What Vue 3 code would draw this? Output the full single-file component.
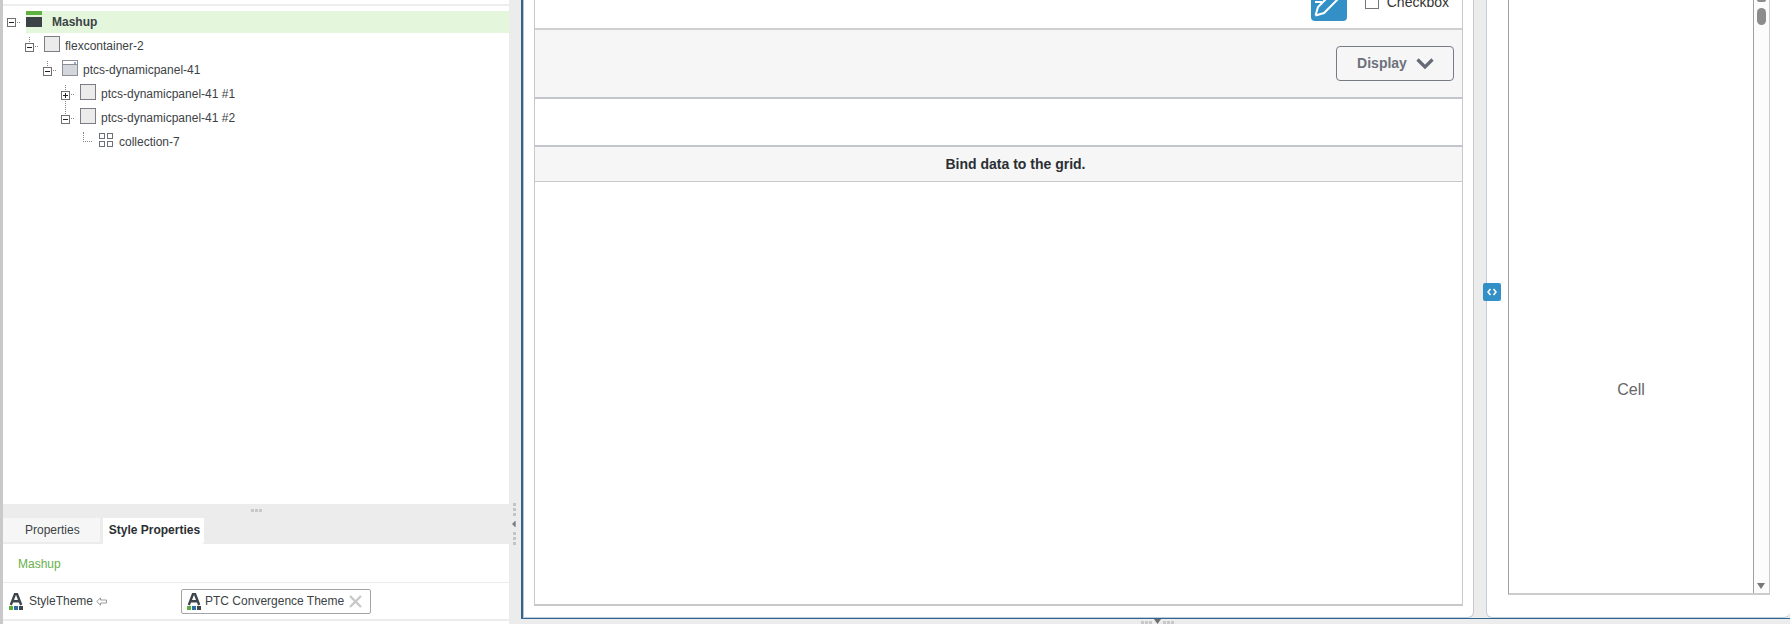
<script setup>
const rows = [
  { name: 'flexcontainer-2', depth: 1, toggle: '−', icon: 'box' },
  { name: 'ptcs-dynamicpanel-41', depth: 2, toggle: '−', icon: 'panel' },
  { name: 'ptcs-dynamicpanel-41 #1', depth: 3, toggle: '+', icon: 'box' },
  { name: 'ptcs-dynamicpanel-41 #2', depth: 3, toggle: '−', icon: 'box', tall: true },
]
</script>

<template>
  <div class="page">
    <aside class="left">
      <div class="tree">
        <div class="root">
          <span class="toggle"><i class="minus"></i></span>
          <span class="dots-h root-dots"></span>
          <span class="mashup-row">
            <svg class="mashup-icon" width="16" height="16" viewBox="0 0 16 16">
              <rect x="0" y="0" width="16" height="4" fill="#5fb23f" />
              <rect x="0" y="6" width="16" height="10" fill="#3c4245" />
            </svg>
            <b>Mashup</b>
          </span>
        </div>
        <div v-for="r in rows" :key="r.name" class="node" :class="'d' + r.depth">
          <span class="connector" :class="{ tall: r.tall }"></span>
          <span class="toggle"><i class="minus"></i><i v-if="r.toggle === '+'" class="plus"></i></span>
          <span class="dots-h"></span>
          <span v-if="r.icon === 'box'" class="box-icon"></span>
          <span v-else class="panel-icon"><i></i></span>
          <span class="label">{{ r.name }}</span>
        </div>
        <div class="node d4">
          <span class="elbow"></span>
          <svg class="grid-icon" width="14" height="14" viewBox="0 0 14 14">
            <rect x="0.5" y="0.5" width="5" height="5" fill="none" stroke="#6c7078" />
            <rect x="8.5" y="0.5" width="5" height="5" fill="none" stroke="#6c7078" />
            <rect x="0.5" y="8.5" width="5" height="5" fill="none" stroke="#6c7078" />
            <rect x="8.5" y="8.5" width="5" height="5" fill="none" stroke="#6c7078" />
          </svg>
          <span class="label">collection-7</span>
        </div>
      </div>
      <div class="tabbar">
        <div class="grip"><i></i><i></i><i></i></div>
        <div class="tabs">
          <div class="tab">Properties</div>
          <div class="tab active">Style Properties</div>
        </div>
      </div>
      <div class="selected-name">Mashup</div>
      <div class="prop-row">
        <svg class="theme-icon" width="14" height="17" viewBox="0 0 14 17">
          <path d="M1.8 12 L6 1 H8 L12.2 12 M3.5 8.3 H10.5" fill="none" stroke="#3f464b" stroke-width="2.4" />
          <rect x="0" y="13" width="4" height="4" fill="#5aae3a" />
          <rect x="5" y="13" width="4" height="4" fill="#2f6ea5" />
          <rect x="10" y="13" width="4" height="4" fill="#3f464b" />
        </svg>
        <span class="prop-name">StyleTheme</span>
        <svg class="arrow" width="11" height="9" viewBox="0 0 11 9">
          <path d="M4.5 0.8 L0.8 4.5 L4.5 8.2 V6 H10.5 V3 H4.5 Z" fill="#fff" stroke="#9a9a9a" />
        </svg>
        <div class="chip">
          <svg class="theme-icon" width="14" height="17" viewBox="0 0 14 17">
            <path d="M1.8 12 L6 1 H8 L12.2 12 M3.5 8.3 H10.5" fill="none" stroke="#3f464b" stroke-width="2.4" />
            <rect x="0" y="13" width="4" height="4" fill="#5aae3a" />
            <rect x="5" y="13" width="4" height="4" fill="#2f6ea5" />
            <rect x="10" y="13" width="4" height="4" fill="#3f464b" />
          </svg>
          <span>PTC Convergence Theme</span>
          <svg class="x" width="13" height="13" viewBox="0 0 13 13">
            <path d="M1 1 L12 12 M12 1 L1 12" stroke="#c8c8c8" stroke-width="2.4" />
          </svg>
        </div>
      </div>
    </aside>

    <div class="splitter">
      <div class="vdots"><i></i><i></i><i></i></div>
      <svg class="collapse" width="4" height="6" viewBox="0 0 4 6">
        <path d="M0 3 L3 0 V6 Z" fill="#8a7a66" />
        <rect x="3" y="0" width="1" height="6" fill="#7fa8d4" />
      </svg>
      <div class="vdots"><i></i><i></i><i></i></div>
    </div>

    <main class="canvas-wrap">
      <div class="canvas">
        <section class="stage">
          <div class="pane-left">
            <div class="grid-widget">
              <div class="band top">
                <div class="edit-btn">
                  <svg width="36" height="36" viewBox="0 0 36 36">
                    <path d="M4.5 30.5 L7 22 L25 4 M4.5 30.5 L13 28 L32 9 M4 17 H11" fill="none" stroke="#fff" stroke-width="2" />
                  </svg>
                </div>
                <label class="check"><span class="check-box"></span>Checkbox</label>
              </div>
              <div class="band toolbar">
                <button class="display"><span class="display-text">Display</span>
                  <svg width="18" height="12" viewBox="0 0 18 12"><path d="M1.5 1.5 L9 9 L16.5 1.5" fill="none" stroke="#656a76" stroke-width="3.2" /></svg>
                </button>
              </div>
              <div class="band spacer"></div>
              <div class="band hint">Bind data to the grid.</div>
              <div class="band body"></div>
            </div>
          </div>
          <div class="gutter"></div>
          <div class="expander">
            <svg width="10" height="8" viewBox="0 0 10 8"><path d="M3.5 1 L1 4 L3.5 7 M6.5 1 L9 4 L6.5 7" fill="none" stroke="#fff" stroke-width="1.5" /></svg>
          </div>
          <div class="pane-right">
            <div class="cell-frame">
              <div class="cell">Cell</div>
              <div class="scrollbar">
                <span class="thumb-a"></span>
                <span class="thumb-b"></span>
                <span class="down"></span>
              </div>
            </div>
          </div>
        </section>
      </div>
      <div class="bottom-strip">
        <div class="hgrip"><i></i><i></i><i></i></div>
        <svg width="7" height="5" viewBox="0 0 7 5"><path d="M3.5 5 L0 0 H7 Z" fill="#6d6d6d" /></svg>
        <div class="hgrip"><i></i><i></i><i></i></div>
      </div>
    </main>
  </div>
</template>

<style scoped>
.page {
  width: 1790px;
  height: 624px;
  display: flex;
  overflow: hidden;
  background: #fff;
  font-family: "Liberation Sans", Arial, sans-serif;
  font-size: 12px;
  color: #333;
}
.left {
  width: 509px;
  flex: none;
  border-left: 3px solid #c9c9c9;
  box-sizing: border-box;
  display: flex;
  flex-direction: column;
}
.tree {
  height: 500px;
  box-sizing: border-box;
  border-top: 2px solid #eeeeee;
  margin-top: 4px;
  padding-top: 5px;
  flex: none;
}
.root {
  height: 22px;
  display: flex;
  align-items: center;
  padding-left: 4px;
}
.toggle {
  width: 9px;
  height: 9px;
  box-sizing: border-box;
  border: 1px solid #707070;
  flex: none;
  position: relative;
  background: #fff;
}
.minus {
  position: absolute;
  left: 1px;
  width: 5px;
  top: 3px;
  height: 1px;
  background: #222;
}
.plus {
  position: absolute;
  top: 1px;
  height: 5px;
  left: 3px;
  width: 1px;
  background: #222;
}
.dots-h {
  width: 4px;
  height: 1px;
  margin-left: 1px;
  flex: none;
  background-image: linear-gradient(90deg, #888 1px, transparent 1px);
  background-size: 2px 1px;
}
.root-dots {
  margin-right: 5px;
}
.mashup-row {
  flex: 1;
  height: 22px;
  background: #e4f7dc;
  display: flex;
  align-items: center;
}
.mashup-icon {
  flex: none;
  margin-top: -6px;
}
.mashup-row b {
  margin-left: 10px;
  font-size: 12px;
  color: #3c4245;
}
.node {
  height: 24px;
  display: flex;
  align-items: center;
  position: relative;
}
.d1 { padding-left: 22px; }
.d2 { padding-left: 40px; }
.d3 { padding-left: 58px; }
.d4 { padding-left: 76px; }
.connector {
  position: absolute;
  top: 4px;
  height: 6px;
  width: 1px;
  margin-left: 4px;
  background-image: linear-gradient(#888 1px, transparent 1px);
  background-size: 1px 2px;
}
.connector.tall {
  top: -4px;
  height: 14px;
}
.node .toggle {
  margin-top: 5px;
}
.node .dots-h {
  margin-top: 3px;
  margin-right: 5px;
}
.box-icon {
  width: 16px;
  height: 16px;
  box-sizing: border-box;
  flex: none;
  border: 1px solid #7b7f85;
  background: #ebebeb;
  margin-right: 5px;
  margin-top: -3px;
}
.panel-icon {
  width: 16px;
  height: 16px;
  box-sizing: border-box;
  flex: none;
  border: 1px solid #8b9097;
  background: #d3d7db;
  margin-right: 5px;
  margin-top: -3px;
  position: relative;
}
.panel-icon i {
  position: absolute;
  left: 0;
  right: 0;
  top: 0;
  height: 3px;
  background: #fff;
  border-bottom: 1px solid #8b9097;
}
.panel-icon i::after {
  content: "";
  position: absolute;
  right: 1px;
  top: 1px;
  width: 2px;
  height: 2px;
  background: #8fb6d8;
}
.label {
  color: #3c4245;
  white-space: nowrap;
  margin-top: 2px;
}
.elbow {
  width: 9px;
  height: 10px;
  margin: -9px 7px 0 4px;
  box-sizing: border-box;
  flex: none;
  border-left: 1px dotted #888;
  border-bottom: 1px dotted #888;
}
.grid-icon {
  flex: none;
  margin-right: 6px;
  margin-top: -3px;
}
.tabbar {
  height: 40px;
  flex: none;
  background: #ececec;
  display: flex;
  flex-direction: column;
  justify-content: flex-end;
  position: relative;
}
.grip {
  position: absolute;
  top: 5px;
  left: 248px;
  display: flex;
  gap: 1px;
}
.grip i {
  width: 3px;
  height: 3px;
  background: #c8c8c8;
}
.tabs {
  display: flex;
  gap: 3px;
  height: 26px;
}
.tab {
  height: 24px;
  padding: 0 20px 0 22px;
  background: #f6f6f6;
  line-height: 24px;
  color: #3c4245;
}
.tab.active {
  height: 26px;
  padding: 0 4px 0 6px;
  background: #fff;
  font-weight: 700;
  color: #2b2f33;
  border-bottom-right-radius: 3px;
}
.selected-name {
  height: 38px;
  flex: none;
  line-height: 40px;
  padding-left: 15px;
  color: #68b04a;
  border-bottom: 1px solid #ececec;
}
.prop-row {
  height: 38px;
  flex: none;
  box-sizing: border-box;
  display: flex;
  align-items: center;
  padding-left: 6px;
  border-bottom: 2px solid #ececec;
}
.theme-icon {
  flex: none;
}
.prop-name {
  margin-left: 6px;
  color: #3c4245;
}
.arrow {
  margin-left: 3px;
  margin-right: 74px;
  flex: none;
}
.chip {
  width: 190px;
  height: 25px;
  box-sizing: border-box;
  border: 1px solid #a5a5a5;
  border-radius: 2px;
  display: flex;
  align-items: center;
  padding-left: 5px;
  color: #3c4245;
  white-space: nowrap;
}
.chip span {
  margin-left: 4px;
}
.x {
  margin-left: 5px;
  flex: none;
}
.splitter {
  width: 12px;
  flex: none;
  background: #ececec;
  display: flex;
  flex-direction: column;
  align-items: center;
  padding: 503px 2px 0 0;
  box-sizing: border-box;
  gap: 5px;
}
.vdots {
  display: flex;
  flex-direction: column;
  gap: 2px;
}
.vdots i {
  width: 3px;
  height: 3px;
  background: #c4c4c4;
}
.canvas-wrap {
  flex: 1;
  min-width: 0;
  display: flex;
  flex-direction: column;
  background: #ececec;
}
.canvas {
  height: 619px;
  flex: none;
  box-sizing: border-box;
  border-left: 2px solid #33638f;
  border-bottom: 1px solid #33638f;
}
.stage {
  height: 100%;
  display: flex;
  align-items: stretch;
  box-sizing: border-box;
  background: #ececec;
  position: relative;
}
.pane-left {
  width: 951px;
  flex: none;
  box-sizing: border-box;
  background: #fff;
  border-left: 1px solid #c4c4c4;
  border-right: 1px solid #c8c8c8;
  border-bottom: 1px solid #b9cfe0;
  border-bottom-right-radius: 6px;
  padding-left: 10px;
}
.grid-widget {
  width: 929px;
  height: 606px;
  box-sizing: border-box;
  border: 1px solid #c8c8c8;
  border-top: 0;
  border-bottom-width: 2px;
  display: flex;
  flex-direction: column;
}
.band {
  box-sizing: border-box;
  flex: none;
}
.top {
  height: 30px;
  border-bottom: 2px solid #cfcfcf;
  display: flex;
  justify-content: flex-end;
  align-items: flex-end;
  padding-right: 13px;
  padding-bottom: 7px;
}
.edit-btn {
  width: 36px;
  height: 36px;
  background: #3390c7;
  border-radius: 4px;
  flex: none;
}
.check {
  display: flex;
  align-items: center;
  font-size: 14px;
  line-height: 16px;
  margin-left: 18px;
  margin-bottom: 11px;
  color: #333;
}
.check-box {
  width: 14px;
  height: 14px;
  box-sizing: border-box;
  border: 1px solid #767676;
  margin-right: 8px;
  flex: none;
}
.toolbar {
  height: 69px;
  background: #f6f6f6;
  border-bottom: 2px solid #c2c6cc;
  display: flex;
  justify-content: flex-end;
  align-items: center;
  padding-right: 8px;
}
.display {
  width: 118px;
  height: 35px;
  background: transparent;
  border: 1px solid #767b85;
  border-radius: 4px;
  font: 700 14px "Liberation Sans", Arial, sans-serif;
  color: #6c717c;
  display: flex;
  align-items: center;
  justify-content: center;
  gap: 9px;
  padding: 0 0 0 1px;
}
.display-text {
  margin-bottom: 2px;
}
.spacer {
  height: 48px;
  border-bottom: 2px solid #c2c6cc;
}
.hint {
  height: 35px;
  background: #f6f6f6;
  border-bottom: 1px solid #c8c8cc;
  font-weight: 700;
  font-size: 14px;
  color: #2b2f33;
  text-align: center;
  line-height: 34px;
  padding-left: 34px;
}
.body {
  flex: 1;
}
.gutter {
  width: 12px;
  flex: none;
}
.expander {
  position: absolute;
  left: 960px;
  top: 283px;
  width: 18px;
  height: 18px;
  background: #3390c7;
  border-radius: 2px;
  display: flex;
  align-items: center;
  justify-content: center;
}
.pane-right {
  flex: 1;
  min-width: 0;
  box-sizing: border-box;
  background: #fff;
  border-left: 1px solid #c2ccd6;
  border-bottom: 1px solid #b9cfe0;
  border-bottom-left-radius: 6px;
  border-bottom-right-radius: 6px;
  padding-left: 21px;
}
.cell-frame {
  width: 262px;
  height: 595px;
  box-sizing: border-box;
  border-left: 1px solid #a0a0a0;
  border-bottom: 2px solid #cccccc;
  display: flex;
}
.cell {
  width: 244px;
  flex: none;
  display: flex;
  align-items: center;
  justify-content: center;
  font-size: 16px;
  color: #666;
  padding-top: 186px;
  box-sizing: border-box;
  height: 100%;
}
.scrollbar {
  width: 17px;
  flex: none;
  box-sizing: border-box;
  background: #fcfcfc;
  border-left: 1px solid #a0a0a0;
  border-right: 1px solid #ccc;
  position: relative;
}
.thumb-a,
.thumb-b,
.down {
  position: absolute;
}
.thumb-a {
  background: #8c8c8c;
  left: 3px;
  top: 0;
  width: 9px;
  height: 2px;
  border-radius: 0 0 3px 3px;
}
.thumb-b {
  background: #8c8c8c;
  left: 3px;
  top: 8px;
  width: 9px;
  height: 17px;
  border-radius: 5px;
}
.down {
  left: 3px;
  bottom: 4px;
  width: 0;
  height: 0;
  border-left: 4px solid transparent;
  border-right: 4px solid transparent;
  border-top: 6px solid #777;
}
.bottom-strip {
  flex: 1;
  display: flex;
  align-items: flex-end;
  justify-content: center;
  gap: 2px;
  padding-left: 3px;
}
.hgrip {
  display: flex;
  gap: 1px;
}
.hgrip i {
  width: 3px;
  height: 3px;
  background: #c8c8c8;
}
</style>
